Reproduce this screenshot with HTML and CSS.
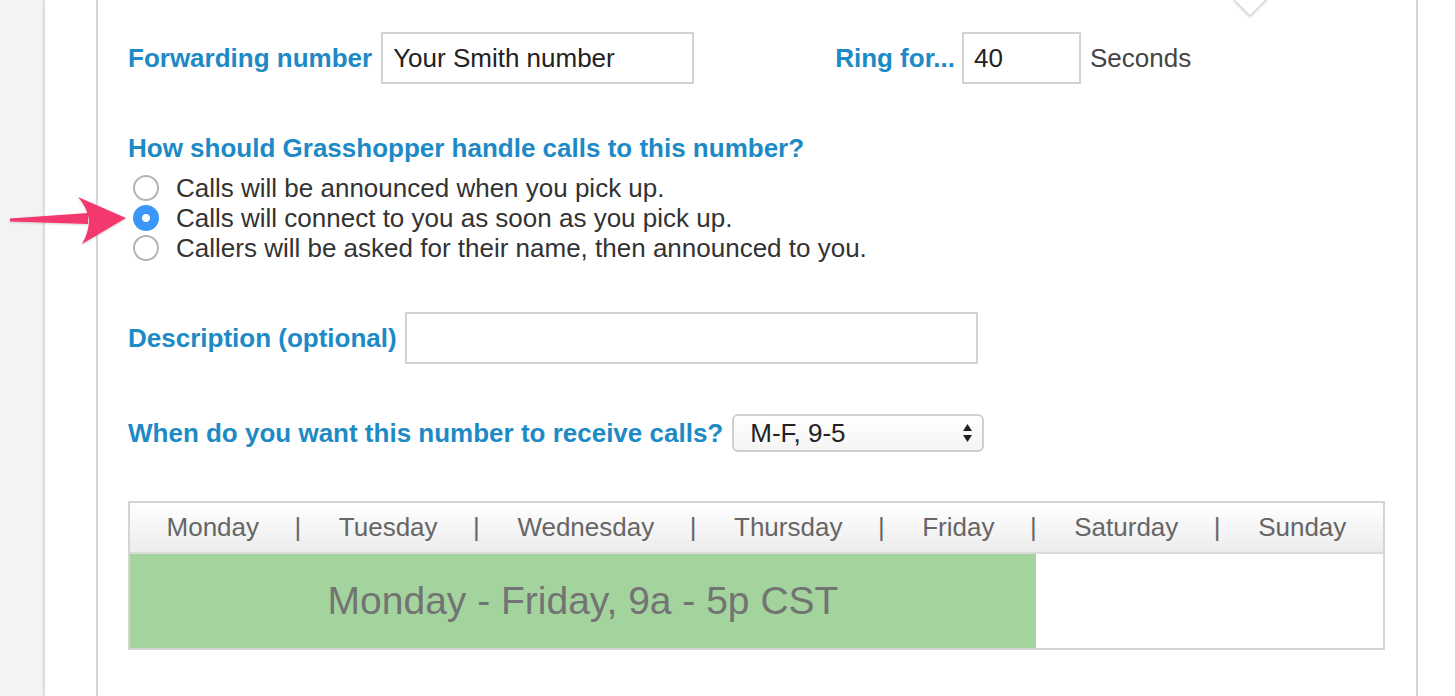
FILE: index.html
```html
<!DOCTYPE html>
<html lang="en">
<head>
<meta charset="utf-8">
<title>Forwarding number settings</title>
<link rel="stylesheet" href="styles.css">
</head>
<body>
<div class="page">
  <div class="panel">
    <svg class="pointer" width="44" height="22" viewBox="0 0 44 22" aria-hidden="true">
      <polygon points="4,-2 40,-2 22,16" fill="#ffffff" stroke="#d9d9d9" stroke-width="1.5"/>
    </svg>

    <div class="row">
      <span class="label">Forwarding number</span>
      <div class="input input-forward">Your Smith number</div>
      <span class="label label-ring">Ring for...</span>
      <div class="input input-ring">40</div>
      <span class="unit">Seconds</span>
    </div>

    <div class="question">How should Grasshopper handle calls to this number?</div>
    <div class="options">
      <div class="option"><span class="radio"></span><span>Calls will be announced when you pick up.</span></div>
      <div class="option"><span class="radio radio-on"></span><span>Calls will connect to you as soon as you pick up.</span></div>
      <div class="option"><span class="radio"></span><span>Callers will be asked for their name, then announced to you.</span></div>
    </div>

    <div class="row row-desc">
      <span class="label">Description (optional)</span>
      <div class="input input-desc"></div>
    </div>

    <div class="row row-when">
      <span class="label">When do you want this number to receive calls?</span>
      <div class="select">
        <span>M-F, 9-5</span>
        <svg width="11" height="22" viewBox="0 0 11 22" aria-hidden="true">
          <polygon points="5.5,2 10,9 1,9" fill="#222"/>
          <polygon points="1,13 10,13 5.5,20" fill="#222"/>
        </svg>
      </div>
    </div>

    <div class="schedule">
      <div class="days">
        <span>Monday</span><span class="sep">|</span>
        <span>Tuesday</span><span class="sep">|</span>
        <span>Wednesday</span><span class="sep">|</span>
        <span>Thursday</span><span class="sep">|</span>
        <span>Friday</span><span class="sep">|</span>
        <span>Saturday</span><span class="sep">|</span>
        <span>Sunday</span>
      </div>
      <div class="slots">
        <div class="slot-on">Monday - Friday, 9a - 5p CST</div>
        <div class="slot-off"></div>
      </div>
    </div>
  </div>
</div>

<svg class="arrow" width="130" height="60" viewBox="0 190 130 60" aria-hidden="true">
  <defs>
    <filter id="sh" x="-10%" y="-20%" width="120%" height="140%">
      <feDropShadow dx="0" dy="1" stdDeviation="1" flood-color="#000" flood-opacity="0.18"/>
    </filter>
  </defs>
  <g fill="#f2386c" filter="url(#sh)">
    <polygon points="10,218.5 88,213 88,224 10,221.5"/>
    <path d="M78,197 L126,218 L82,244 Q89,232 89,220 Q87,207 78,197 Z"/>
  </g>
</svg>
</body>
</html>
```

FILE: styles.css
```css
html, body {
  margin: 0;
  padding: 0;
  height: 100%;
  overflow: hidden;
}

body {
  position: relative;
  background: #f3f3f3;
  font-family: "Liberation Sans", Arial, Helvetica, sans-serif;
  color: #333;
}

.page {
  position: relative;
  margin-left: 45px;
  padding-left: 51px;
  height: 696px;
  background: #ffffff;
  box-shadow: -1px 0 3px rgba(0, 0, 0, 0.18);
}

.panel {
  position: relative;
  box-sizing: border-box;
  width: 1322px;
  height: 696px;
  border-left: 2px solid #d6d6d6;
  border-right: 2px solid #d6d6d6;
  padding: 32px 0 0 30px;
}

.pointer {
  position: absolute;
  top: 0;
  left: 1130px;
  filter: drop-shadow(0 1px 1px rgba(0, 0, 0, 0.12));
}

.row {
  display: flex;
  align-items: center;
}

.label {
  font-size: 26px;
  font-weight: bold;
  color: #1d8ac6;
  white-space: nowrap;
}

.input {
  box-sizing: border-box;
  height: 52px;
  border: 2px solid #d2d2d2;
  background: #fff;
  padding: 0 10px;
  font-size: 26px;
  line-height: 48px;
  color: #222;
}

.input-forward {
  width: 313px;
  margin-left: 9px;
}

.label-ring {
  margin-left: 141px;
}

.input-ring {
  width: 119px;
  margin-left: 7px;
}

.unit {
  margin-left: 9px;
  font-size: 26px;
  color: #444;
}

.question {
  margin-top: 49px;
  font-size: 26px;
  line-height: 30px;
  font-weight: bold;
  color: #1d8ac6;
}

.options {
  margin-top: 10px;
}

.option {
  display: flex;
  align-items: center;
  height: 30px;
  font-size: 26px;
  color: #333;
}

.radio {
  box-sizing: border-box;
  width: 26px;
  height: 26px;
  margin: 0 17px 0 5px;
  border-radius: 50%;
  border: 2px solid #b4b4b4;
  background: #fff;
}

.radio-on {
  border: none;
  background: radial-gradient(circle, #ffffff 0 3.5px, #3a96f7 4.5px);
}

.row-desc {
  margin-top: 49px;
}

.input-desc {
  width: 573px;
  margin-left: 8px;
}

.row-when {
  margin-top: 50px;
}

.select {
  box-sizing: border-box;
  display: flex;
  align-items: center;
  justify-content: space-between;
  width: 252px;
  height: 38px;
  margin-left: 9px;
  padding: 0 9px 0 16px;
  border: 2px solid #d0d0d0;
  border-radius: 6px;
  background: linear-gradient(#ffffff, #f4f4f4);
  font-size: 26px;
  color: #222;
}

.schedule {
  margin-top: 49px;
  width: 1257px;
  box-sizing: border-box;
  border: 2px solid #d4d4d4;
}

.days {
  display: flex;
  justify-content: space-evenly;
  align-items: center;
  height: 49px;
  border-bottom: 2px solid #dadada;
  background: linear-gradient(#ffffff, #ececec);
  font-size: 26px;
  color: #666;
}

.sep {
  margin-left: -1px;
  margin-right: 1px;
}

.slots {
  display: grid;
  grid-template-columns: 906px 1fr;
  height: 94px;
}

.slot-on {
  display: flex;
  align-items: center;
  justify-content: center;
  background: #a3d49d;
  font-size: 39px;
  color: #737373;
}

.slot-off {
  background: #fff;
}

.arrow {
  position: absolute;
  left: 0;
  top: 190px;
}
```
